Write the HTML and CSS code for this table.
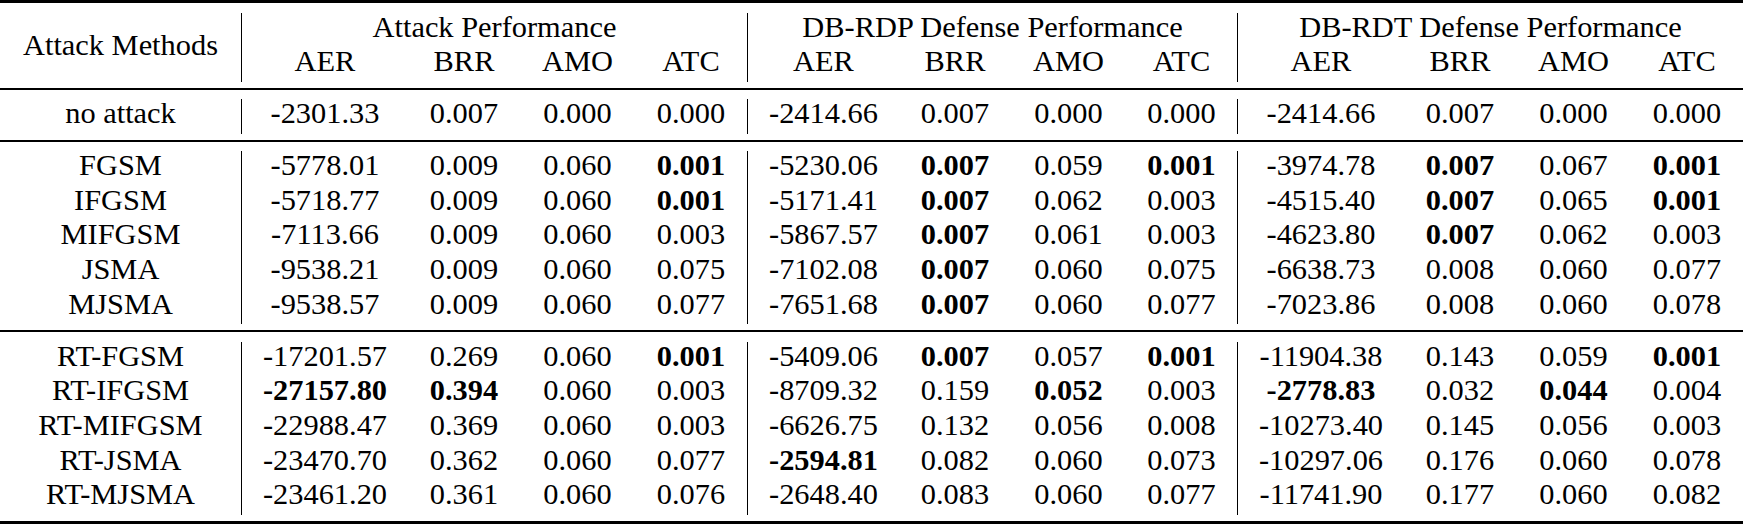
FILE: index.html
```html
<!DOCTYPE html>
<html lang="en">
<head>
<meta charset="utf-8">
<title>Attack and Defense Performance</title>
<link rel="stylesheet" href="styles.css">
</head>
<body>
<div class="table">
  <div class="section head">
    <div class="cell method-head">Attack Methods</div>
    <div class="cell group-title g1 vl">Attack Performance</div>
    <div class="cell group-title g2 vl">DB-RDP Defense Performance</div>
    <div class="cell group-title g3 vl">DB-RDT Defense Performance</div>
    <div class="cell vl">AER</div><div class="cell">BRR</div><div class="cell">AMO</div><div class="cell">ATC</div>
    <div class="cell vl">AER</div><div class="cell">BRR</div><div class="cell">AMO</div><div class="cell">ATC</div>
    <div class="cell vl">AER</div><div class="cell">BRR</div><div class="cell">AMO</div><div class="cell">ATC</div>
  </div>
  <div class="section">
    <div class="cell">no attack</div>
    <div class="cell vl">-2301.33</div><div class="cell">0.007</div><div class="cell">0.000</div><div class="cell">0.000</div>
    <div class="cell vl">-2414.66</div><div class="cell">0.007</div><div class="cell">0.000</div><div class="cell">0.000</div>
    <div class="cell vl">-2414.66</div><div class="cell">0.007</div><div class="cell">0.000</div><div class="cell">0.000</div>
  </div>
  <div class="section">
    <div class="cell">FGSM</div>
    <div class="cell vl">-5778.01</div><div class="cell">0.009</div><div class="cell">0.060</div><div class="cell b">0.001</div>
    <div class="cell vl">-5230.06</div><div class="cell b">0.007</div><div class="cell">0.059</div><div class="cell b">0.001</div>
    <div class="cell vl">-3974.78</div><div class="cell b">0.007</div><div class="cell">0.067</div><div class="cell b">0.001</div>

    <div class="cell">IFGSM</div>
    <div class="cell vl">-5718.77</div><div class="cell">0.009</div><div class="cell">0.060</div><div class="cell b">0.001</div>
    <div class="cell vl">-5171.41</div><div class="cell b">0.007</div><div class="cell">0.062</div><div class="cell">0.003</div>
    <div class="cell vl">-4515.40</div><div class="cell b">0.007</div><div class="cell">0.065</div><div class="cell b">0.001</div>

    <div class="cell">MIFGSM</div>
    <div class="cell vl">-7113.66</div><div class="cell">0.009</div><div class="cell">0.060</div><div class="cell">0.003</div>
    <div class="cell vl">-5867.57</div><div class="cell b">0.007</div><div class="cell">0.061</div><div class="cell">0.003</div>
    <div class="cell vl">-4623.80</div><div class="cell b">0.007</div><div class="cell">0.062</div><div class="cell">0.003</div>

    <div class="cell">JSMA</div>
    <div class="cell vl">-9538.21</div><div class="cell">0.009</div><div class="cell">0.060</div><div class="cell">0.075</div>
    <div class="cell vl">-7102.08</div><div class="cell b">0.007</div><div class="cell">0.060</div><div class="cell">0.075</div>
    <div class="cell vl">-6638.73</div><div class="cell">0.008</div><div class="cell">0.060</div><div class="cell">0.077</div>

    <div class="cell">MJSMA</div>
    <div class="cell vl">-9538.57</div><div class="cell">0.009</div><div class="cell">0.060</div><div class="cell">0.077</div>
    <div class="cell vl">-7651.68</div><div class="cell b">0.007</div><div class="cell">0.060</div><div class="cell">0.077</div>
    <div class="cell vl">-7023.86</div><div class="cell">0.008</div><div class="cell">0.060</div><div class="cell">0.078</div>
  </div>
  <div class="section last">
    <div class="cell">RT-FGSM</div>
    <div class="cell vl">-17201.57</div><div class="cell">0.269</div><div class="cell">0.060</div><div class="cell b">0.001</div>
    <div class="cell vl">-5409.06</div><div class="cell b">0.007</div><div class="cell">0.057</div><div class="cell b">0.001</div>
    <div class="cell vl">-11904.38</div><div class="cell">0.143</div><div class="cell">0.059</div><div class="cell b">0.001</div>

    <div class="cell">RT-IFGSM</div>
    <div class="cell vl b">-27157.80</div><div class="cell b">0.394</div><div class="cell">0.060</div><div class="cell">0.003</div>
    <div class="cell vl">-8709.32</div><div class="cell">0.159</div><div class="cell b">0.052</div><div class="cell">0.003</div>
    <div class="cell vl b">-2778.83</div><div class="cell">0.032</div><div class="cell b">0.044</div><div class="cell">0.004</div>

    <div class="cell">RT-MIFGSM</div>
    <div class="cell vl">-22988.47</div><div class="cell">0.369</div><div class="cell">0.060</div><div class="cell">0.003</div>
    <div class="cell vl">-6626.75</div><div class="cell">0.132</div><div class="cell">0.056</div><div class="cell">0.008</div>
    <div class="cell vl">-10273.40</div><div class="cell">0.145</div><div class="cell">0.056</div><div class="cell">0.003</div>

    <div class="cell">RT-JSMA</div>
    <div class="cell vl">-23470.70</div><div class="cell">0.362</div><div class="cell">0.060</div><div class="cell">0.077</div>
    <div class="cell vl b">-2594.81</div><div class="cell">0.082</div><div class="cell">0.060</div><div class="cell">0.073</div>
    <div class="cell vl">-10297.06</div><div class="cell">0.176</div><div class="cell">0.060</div><div class="cell">0.078</div>

    <div class="cell">RT-MJSMA</div>
    <div class="cell vl">-23461.20</div><div class="cell">0.361</div><div class="cell">0.060</div><div class="cell">0.076</div>
    <div class="cell vl">-2648.40</div><div class="cell">0.083</div><div class="cell">0.060</div><div class="cell">0.077</div>
    <div class="cell vl">-11741.90</div><div class="cell">0.177</div><div class="cell">0.060</div><div class="cell">0.082</div>
  </div>
</div>
</body>
</html>
```

FILE: styles.css
```css
html, body {
  margin: 0;
  padding: 0;
  background: #ffffff;
}

body {
  font-family: "Liberation Serif", "Times New Roman", serif;
  font-size: 30.4px;
  color: #000000;
}

.table {
  width: 1743px;
  border-top: 3px solid #000000;
}

.section {
  display: grid;
  grid-template-columns: 241px 167px 112px 115px 112px 152px 112px 115px 111px 167px 112px 115px 112px;
  grid-auto-rows: 34.6px;
  padding-top: 9.5px;
  padding-bottom: 6px;
  border-bottom: 2px solid #000000;
}

.section.last {
  border-bottom-width: 3px;
}

.cell {
  line-height: 28px;
  padding-bottom: 6.6px;
  text-align: center;
  white-space: nowrap;
}

.vl {
  border-left: 1px solid #000000;
}

.b {
  font-weight: bold;
}

.method-head {
  grid-row: 1 / span 2;
  grid-column: 1;
  display: flex;
  align-items: center;
  justify-content: center;
  padding-bottom: 4px;
}

.group-title.g1 {
  grid-column: 2 / span 4;
}

.group-title.g2 {
  grid-column: 6 / span 4;
}

.group-title.g3 {
  grid-column: 10 / span 4;
}
```
